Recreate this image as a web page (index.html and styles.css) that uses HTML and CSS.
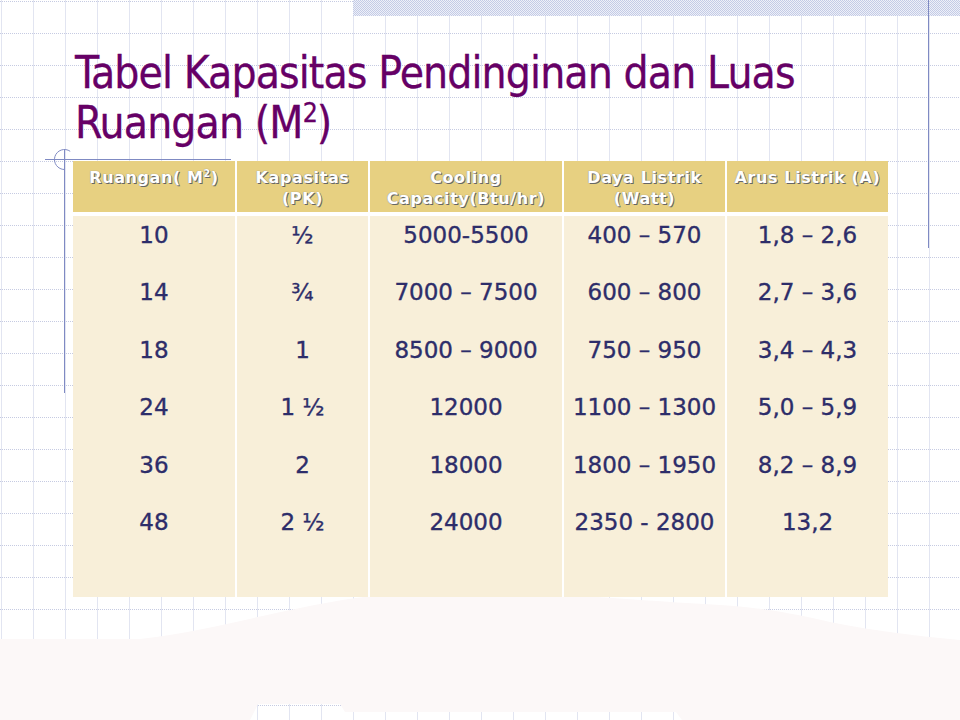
FILE: index.html
```html
<!DOCTYPE html>
<html lang="id">
<head>
<meta charset="utf-8">
<title>Tabel Kapasitas Pendinginan dan Luas Ruangan</title>
<link rel="stylesheet" href="styles.css">
</head>
<body>
<div class="slide">
  <svg class="deco" width="960" height="720" viewBox="0 0 960 720" aria-hidden="true">
    <defs>
      <pattern id="grid" width="32" height="32" patternUnits="userSpaceOnUse">
        <path d="M1.5 0V32" stroke="#e2e5f1" stroke-width="1"/>
        <path d="M0 1.5H32" stroke="#c6cbe2" stroke-width="1" stroke-dasharray="1 1"/>
      </pattern>
      <pattern id="check" width="2" height="2" patternUnits="userSpaceOnUse">
        <rect width="2" height="2" fill="#eef0f8"/>
        <rect width="1" height="1" fill="#c3cbe6"/>
        <rect x="1" y="1" width="1" height="1" fill="#c3cbe6"/>
      </pattern>
    </defs>
    <rect width="960" height="720" fill="#ffffff"/>
    <rect width="960" height="720" fill="url(#grid)"/>
    <rect x="353" y="0" width="607" height="16" fill="url(#check)"/>
    <path d="M0 639 L140 639 C200 632 240 620 300 608 C340 600 370 594 420 594 L560 595 C620 598 680 603 720 605 C760 607 800 615 830 622 C880 632 920 636 960 640 L960 720 L682 720 L676 712 L345 712 L340 704 L258 704 L250 720 L0 720 Z" fill="#fcf8f8"/>
    <line x1="928.5" y1="0" x2="928.5" y2="248" stroke="#7f8ac3" stroke-width="1"/>
    <line x1="64.5" y1="149" x2="64.5" y2="393" stroke="#7f8ac3" stroke-width="1"/>
    <line x1="45" y1="159.5" x2="231" y2="159.5" stroke="#7f8ac3" stroke-width="1"/>
    <path d="M70.2 151.3 A10 10 0 1 0 64.5 169.5" fill="none" stroke="#7f8ac3" stroke-width="1"/>
  </svg>

  <div class="content">
    <h1 class="title">Tabel Kapasitas Pendinginan dan Luas<br>Ruangan (M<sup>2</sup>)</h1>

    <table class="cap-table">
      <colgroup>
        <col class="c1"><col class="c2"><col class="c3"><col class="c4"><col class="c5">
      </colgroup>
      <thead>
        <tr>
          <th>Ruangan( M<sup>2</sup>)</th>
          <th>Kapasitas<br>(PK)</th>
          <th>Cooling<br>Capacity(Btu/hr)</th>
          <th>Daya Listrik<br>(Watt)</th>
          <th>Arus Listrik (A)</th>
        </tr>
      </thead>
      <tbody>
        <tr><td>10</td><td>½</td><td>5000-5500</td><td>400 – 570</td><td>1,8 – 2,6</td></tr>
        <tr><td>14</td><td>¾</td><td>7000 – 7500</td><td>600 – 800</td><td>2,7 – 3,6</td></tr>
        <tr><td>18</td><td>1</td><td>8500 – 9000</td><td>750 – 950</td><td>3,4 – 4,3</td></tr>
        <tr><td>24</td><td>1 ½</td><td>12000</td><td>1100 – 1300</td><td>5,0 – 5,9</td></tr>
        <tr><td>36</td><td>2</td><td>18000</td><td>1800 – 1950</td><td>8,2 – 8,9</td></tr>
        <tr class="last"><td>48</td><td>2 ½</td><td>24000</td><td>2350 - 2800</td><td>13,2</td></tr>
      </tbody>
    </table>
  </div>
</div>
</body>
</html>
```

FILE: styles.css
```css
html, body {
  margin: 0;
  padding: 0;
  background: #ffffff;
}

.slide {
  position: relative;
  width: 960px;
  height: 720px;
  overflow: hidden;
  font-family: "DejaVu Sans", Verdana, sans-serif;
}

.deco {
  position: absolute;
  left: 0;
  top: 0;
  z-index: 0;
}

.content {
  position: relative;
  z-index: 1;
  padding: 48px 0 0 73px;
}

.title {
  margin: 0 0 14px 2px;
  font-family: "DejaVu Sans Condensed", "DejaVu Sans", sans-serif;
  font-weight: normal;
  font-size: 44px;
  line-height: 49.5px;
  letter-spacing: -0.9px;
  color: #660066;
  -webkit-text-stroke: 0.3px #660066;
}

.title sup {
  font-size: 0.6em;
  line-height: 0;
  vertical-align: 0.6em;
}

.cap-table {
  border-collapse: separate;
  border-spacing: 0;
  table-layout: fixed;
  width: 815px;
}

.c1 { width: 162px; }
.c2 { width: 133px; }
.c3 { width: 194px; }
.c4 { width: 163px; }
.c5 { width: 163px; }

.cap-table th {
  height: 55px;
  box-sizing: border-box;
  padding: 6px 0 0;
  vertical-align: top;
  background: #e7d081;
  border-bottom: 4px solid #ffffff;
  color: #ffffff;
  font-family: "DejaVu Sans", Verdana, sans-serif;
  font-size: 16px;
  font-weight: bold;
  line-height: 21px;
  letter-spacing: 0.6px;
  white-space: nowrap;
  text-shadow: 1px 1px 0 #666666, 0 0 1px #7a7a7a;
}

.cap-table th sup {
  font-size: 0.6em;
  line-height: 0;
  vertical-align: 0.6em;
}

.cap-table th + th,
.cap-table td + td {
  border-left: 2px solid #ffffff;
}

.cap-table td {
  height: 57.4px;
  box-sizing: border-box;
  padding: 5px 2px 0;
  vertical-align: top;
  text-align: center;
  background: #f8efd9;
  color: #2d2d6a;
  font-size: 23px;
  line-height: 28.7px;
  -webkit-text-stroke: 0.35px #2d2d6a;
}

.cap-table tr.last td {
  height: 94px;
}
```
